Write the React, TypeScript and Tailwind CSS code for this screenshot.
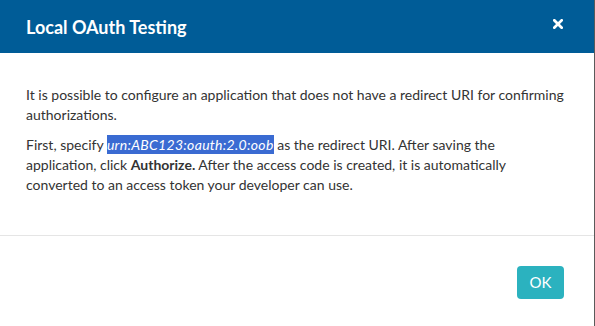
export default function App() {
  return (
    <div
      className="w-[595px] h-[326px] overflow-hidden bg-white flex flex-col border-r border-[#5a5a5a] text-[#333333]"
      style={{ fontFamily: 'Lato, "Open Sans", sans-serif' }}
    >
      {/* Header */}
      <div className="h-[53px] shrink-0 bg-[#005c97] flex items-center justify-between pl-[26px] pr-[31px]">
        <h4 className="text-[18px] font-bold text-white leading-none">Local OAuth Testing</h4>
        <button className="w-[10px] h-[10px] mb-[5px] flex items-center justify-center">
          <svg viewBox="0 0 10 10" width="10" height="10">
            <path d="M1.3 1.3 L8.7 8.7 M8.7 1.3 L1.3 8.7" stroke="white" strokeWidth="2.7" strokeLinecap="square" />
          </svg>
        </button>
      </div>

      {/* Body */}
      <div className="pt-[32px] pb-[30px] pl-[26px] pr-[30px] text-[14px] leading-[20px] border-b border-[#e5e5e5]">
        <p className="mb-[10px]">
          It is possible to configure an application that does not have a redirect URI for confirming authorizations.
        </p>
        <p className="mb-[10px]">
          First, specify{' '}
          <em className="bg-[#3a6bd2] text-white py-[1px] tracking-[0.3px]">urn:ABC123:oauth:2.0:oob</em> as the
          redirect URI. After saving the application, click <strong className="font-bold">Authorize.</strong> After
          the access code is created, it is automatically converted to an access token your developer can use.
        </p>
      </div>

      {/* Footer */}
      <div className="flex justify-end pt-[30px] pr-[30px]">
        <button className="w-[47px] h-[33px] rounded-[4px] bg-[#2bb2bf] text-white text-[15px] leading-none flex items-center justify-center">
          OK
        </button>
      </div>
    </div>
  );
}
